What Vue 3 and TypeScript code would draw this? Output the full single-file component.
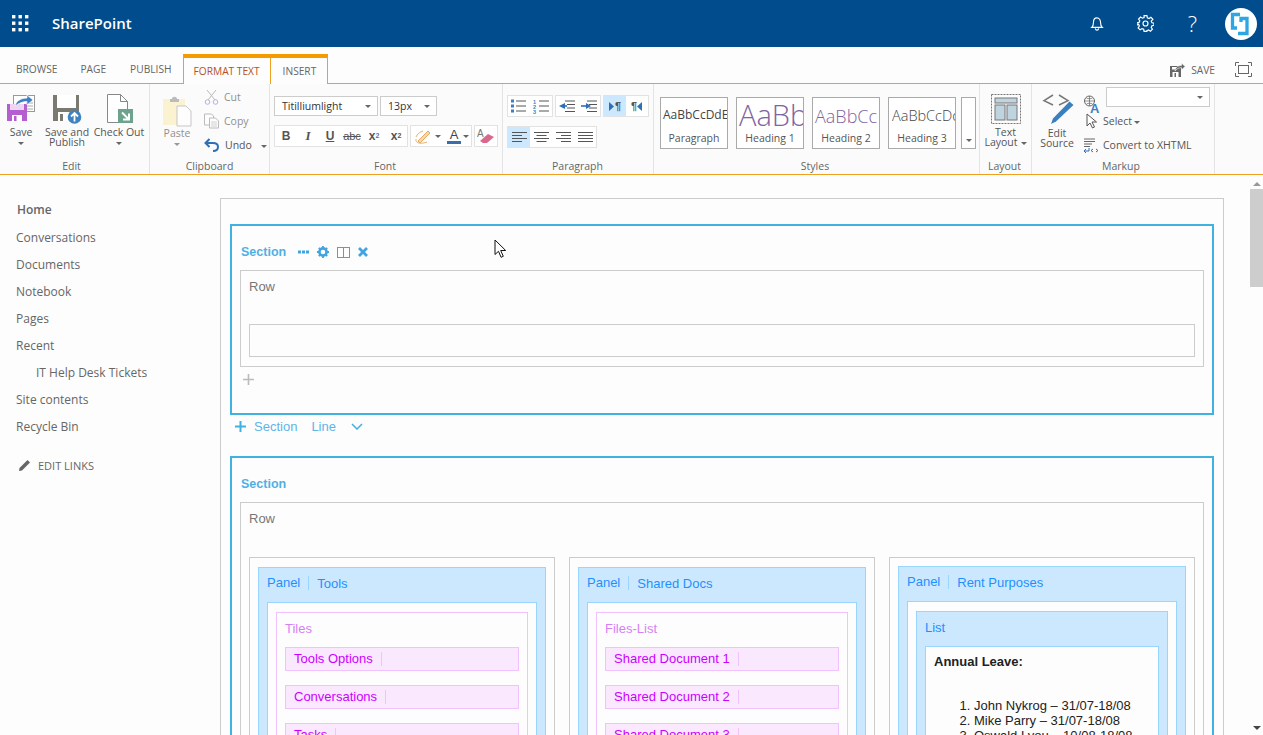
<script setup lang="ts">
const nav = ['Conversations', 'Documents', 'Notebook', 'Pages', 'Recent']
const tileCols = [
  { panel: 'Tools', title: 'Tiles', tiles: ['Tools Options', 'Conversations', 'Tasks'] },
  { panel: 'Shared Docs', title: 'Files-List', tiles: ['Shared Document 1', 'Shared Document 2', 'Shared Document 3'] },
]
const styles = [
  { sample: 'AaBbCcDdE', label: 'Paragraph', cls: 's-p' },
  { sample: 'AaBb', label: 'Heading 1', cls: 's-1' },
  { sample: 'AaBbCc', label: 'Heading 2', cls: 's-2' },
  { sample: 'AaBbCcDd', label: 'Heading 3', cls: 's-3' },
]
const leave = ['John Nykrog – 31/07-18/08', 'Mike Parry – 31/07-18/08', 'Oswald Lyou – 10/08-18/08']
</script>

<template>
  <div class="app">
    <header class="topbar">
      <svg class="waffle" width="17" height="17" viewBox="0 0 17 17" fill="#fff">
        <rect v-for="p in [0,1,2,3,4,5,6,7,8]" :key="p" :x="(p % 3) * 6.5" :y="Math.floor(p / 3) * 6.5" width="3.4" height="3.4" />
      </svg>
      <span class="brand">SharePoint</span>
      <span class="grow"></span>
      <svg class="tico" width="14" height="17" viewBox="0 0 16 18" fill="none" stroke="#fff" stroke-width="1.3"><path d="M2 13.500h12c-1.600-1.400-1.900-3-1.900-5.500 0-3-1.600-5.500-4.100-5.500S3.900 5 3.900 8c0 2.500-.3 4.100-1.900 5.500z"/><path d="M6 14.500c.3 1.300 1 2 2 2s1.700-.7 2-2"/></svg>
      <svg class="tico gear" width="17" height="17" viewBox="0 0 24 24" fill="none" stroke="#fff" stroke-width="1.700"><circle cx="12" cy="12" r="3.500"/><path d="M10 1h4l.6 3 2.400 1 2.600-1.700 2.800 2.800L20.100 8.700l1 2.300 2.900.6v3l-2.900.6-1 2.400 1.700 2.500-2.800 2.800-2.600-1.700-2.400 1L14 23h-4l-.6-2.800-2.400-1-2.600 1.700-2.800-2.800 1.700-2.500-1-2.400L0 14v-3l2.900-.6 1-2.300L2.200 5.600 5 2.800 7.600 4.500 10 3.500z"/></svg>
      <span class="help">?</span>
      <span class="avatar">
        <svg width="36" height="36" viewBox="0 0 36 36"><circle cx="18" cy="18" r="16" fill="#fff"/><path d="M17 8.500H9.500V22H14M18 16v-3.500h6v15H15" fill="none" stroke="#2fa6e4" stroke-width="3.300"/></svg>
      </span>
    </header>

    <nav class="tabs">
      <span class="tab">BROWSE</span>
      <span class="tab t2">PAGE</span>
      <span class="tab t3">PUBLISH</span>
      <span class="tab ctx active">FORMAT TEXT</span>
      <span class="tab ctx c-ins">INSERT</span>
      <span class="grow"></span>
      <svg width="16" height="16" viewBox="0 0 16 16"><path d="M1 4h9l2 2v9H1z" fill="#666"/><rect x="3.500" y="10" width="6" height="5" fill="#fff"/><rect x="5.500" y="11" width="1.500" height="4" fill="#666"/><rect x="3" y="5" width="5" height="2.500" fill="#fff"/><path d="M6 9c.5-4 3.500-5.500 6.500-5.500V1L16 4.500 12.500 8V5.700C10 5.700 8 6.500 6 9z" fill="#666" stroke="#fff" stroke-width=".6"/></svg>
      <span class="savetxt">SAVE</span>
      <svg class="focus" width="17" height="15" viewBox="0 0 17 15" fill="none" stroke="#666"><path d="M.5 4V.5H4M13 .5h3.500V4M16.500 11v3.500H13M4 14.500H.5V11"/><rect x="3.500" y="3.500" width="10" height="8"/></svg>
    </nav>

    <section class="ribbon">
      <div class="grp g-edit">
        <div class="grp-body">
          <div class="big w-save">
            <svg width="30" height="30" viewBox="0 0 30 30">
              <rect x="7.500" y="1.500" width="21" height="16" fill="#fff" stroke="#999"/>
              <path d="M20 9h7M20 12h7M20 15h7" stroke="#aaa"/>
              <path d="M1 10h20v17H1z" fill="#b45ed0"/>
              <rect x="6" y="21" width="10" height="6" fill="#fff"/>
              <rect x="8" y="22" width="2.500" height="5" fill="#b45ed0"/>
              <rect x="4" y="10" width="14" height="6" fill="#ecd6f4"/>
              <path d="M9 12c1-5 6-8 12-8V1l6 5-6 5V7.500c-4 0-8 1.500-12 4.500z" fill="#3f7fbf" stroke="#fff" stroke-width=".7"/>
            </svg>
            <span>Save</span><i class="caret"></i>
          </div>
          <div class="big w-pub">
            <svg width="30" height="30" viewBox="0 0 30 30">
              <path d="M1 1h26v26H1z" fill="#7a7a70"/>
              <rect x="5" y="1" width="19" height="13" fill="#fff"/>
              <rect x="6" y="18" width="13" height="9" fill="#fff"/>
              <rect x="8" y="20" width="3" height="7" fill="#7a7a70"/>
              <circle cx="22.500" cy="23" r="6.800" fill="#3f82c0"/>
              <path d="M22.500 27.500v-8M19 22.500l3.500-3.500 3.500 3.500" fill="none" stroke="#fff" stroke-width="1.800"/>
            </svg>
            <span>Save and<br />Publish</span>
          </div>
          <div class="big w-chk">
            <svg width="30" height="30" viewBox="0 0 30 30">
              <path d="M3.500.5h13l7 7v21h-20z" fill="#fff" stroke="#888"/>
              <path d="M16.500.5v7h7" fill="none" stroke="#888"/>
              <rect x="14" y="15" width="15" height="14" fill="#6da28c"/>
              <path d="M18 18.500l7 7M25 19.500v6h-6" fill="none" stroke="#fff" stroke-width="2"/>
            </svg>
            <span>Check Out</span><i class="caret"></i>
          </div>
        </div>
        <div class="grp-label l-edit">Edit</div>
      </div>

      <div class="grp g-clip">
        <div class="grp-body">
          <div class="big w-paste faded">
            <svg width="30" height="32" viewBox="0 0 30 32">
              <path d="M1 4h22v26H1z" fill="#fbeebc"/>
              <path d="M8 4h2c0-3 5-3 5 0h2v3H8z" fill="#999"/>
              <path d="M15 11h9l5 5v15H15z" fill="#fff" stroke="#aaa"/>
            </svg>
            <span class="paste-l">Paste</span><i class="caret"></i>
          </div>
          <div class="stack">
            <div class="small faded"><svg width="15" height="16" viewBox="0 0 15 16" fill="none" stroke="#999"><path d="M3 1l8 10M12 1L4 11"/><circle cx="3.500" cy="13" r="2.300" stroke="#8a8fd0"/><circle cx="11.500" cy="13" r="2.300" stroke="#8a8fd0"/></svg><span>Cut</span></div>
            <div class="small faded"><svg width="15" height="16" viewBox="0 0 15 16" fill="#fff" stroke="#999"><path d="M.5 1h7l2 2v9h-9z"/><path d="M5.500 5h6l3 3v7h-9z"/><path d="M7 9h6M7 11h6M7 13h6" stroke="#bbb"/></svg><span>Copy</span></div>
            <div class="small"><svg width="16" height="14" viewBox="0 0 16 14" fill="none" stroke="#2f6fb5" stroke-width="2"><path d="M5.500 1L1.500 5l4 4M2 5h7c3 0 5 1.500 5 4s-2 4-5 4"/></svg><span>Undo</span><i class="caret c2"></i></div>
          </div>
        </div>
        <div class="grp-label">Clipboard</div>
      </div>

      <div class="grp g-font">
        <div class="grp-body col">
          <div class="line">
            <div class="sel s-font">Titilliumlight<i class="caret"></i></div>
            <div class="sel s-size">13px<i class="caret"></i></div>
          </div>
          <div class="line l2">
            <div class="btns fmt">
              <span class="ib b">B</span><span class="ib it">I</span><span class="ib un">U</span>
              <span class="ib st">abc</span><span class="ib b">x<sub>2</sub></span><span class="ib b">x<sup>2</sup></span>
            </div>
            <div class="btns colors">
              <span class="ib cb"><svg width="18" height="17" viewBox="0 0 18 17" fill="none"><path d="M3 13L13 3l2 2L5 15z" fill="#f3d9b0" stroke="#e8a860"/><path d="M1 11c-1 5 6 5 11 3" stroke="#eab070"/><path d="M1 9c1-3 4-5 7-6" stroke="#eab070"/></svg><i class="caret"></i></span>
              <span class="ib cb fa"><span class="a-l">A</span><i class="caret"></i></span>
            </div>
            <div class="btns erase"><svg width="18" height="16" viewBox="0 0 18 16"><text x="0" y="9" font-size="10" fill="#777" font-family="Liberation Sans">A</text><path d="M3 13l8-7 6 3-7 6H6z" fill="#d9688f"/></svg></div>
          </div>
        </div>
        <div class="grp-label l-pad">Font</div>
      </div>

      <div class="grp g-para">
        <div class="grp-body col">
          <div class="line p1">
            <div class="btns two">
              <span class="ib"><svg width="16" height="14" viewBox="0 0 16 14"><path d="M5 2h10M5 7h10M5 12h10" stroke="#555"/><path d="M0 .5h3v3H0zM0 5.500h3v3H0zM0 10.500h3v3H0z" fill="#3f7fbf"/></svg></span>
              <span class="ib"><svg width="16" height="15" viewBox="0 0 16 15"><path d="M6 2h10M6 7h10M6 12h10" stroke="#555"/><text x="0" y="4.500" font-size="5.500" font-weight="700" fill="#3f7fbf" font-family="Liberation Sans">1</text><text x="0" y="9.500" font-size="5.500" font-weight="700" fill="#3f7fbf" font-family="Liberation Sans">2</text><text x="0" y="14.500" font-size="5.500" font-weight="700" fill="#3f7fbf" font-family="Liberation Sans">3</text></svg></span>
            </div>
            <div class="btns two">
              <span class="ib"><svg width="16" height="12" viewBox="0 0 16 12"><path d="M6 1h10M8 4.500h8M8 8h8M6 11.500h10" stroke="#555"/><path d="M6 3v6L0 6z" fill="#2f6fb5"/><path d="M2 5.200h6v1.600H2z" fill="#2f6fb5"/></svg></span>
              <span class="ib"><svg width="16" height="12" viewBox="0 0 16 12"><path d="M6 1h10M8 4.500h8M8 8h8M6 11.500h10" stroke="#555"/><path d="M5 3v6l5 -3z" fill="#2f6fb5"/><path d="M0 5.200h6v1.600H0z" fill="#2f6fb5"/></svg></span>
            </div>
            <div class="btns two">
              <span class="ib on dir"><svg width="6" height="9" viewBox="0 0 6 9"><path d="M0 0l5 4.500L0 9z" fill="#2f6fb5"/></svg><b>¶</b></span>
              <span class="ib dir"><b>¶</b><svg width="6" height="9" viewBox="0 0 6 9"><path d="M5 0L0 4.500 5 9z" fill="#2f6fb5"/></svg></span>
            </div>
          </div>
          <div class="line l2">
            <div class="btns four">
              <span class="ib on"><svg width="15" height="11" viewBox="0 0 15 11" stroke="#555"><path d="M0 .5h15M0 3.500h10M0 6.500h15M0 9.500h10"/></svg></span>
              <span class="ib"><svg width="15" height="11" viewBox="0 0 15 11" stroke="#555"><path d="M0 .5h15M2.500 3.500h10M0 6.500h15M2.500 9.500h10"/></svg></span>
              <span class="ib"><svg width="15" height="11" viewBox="0 0 15 11" stroke="#555"><path d="M0 .5h15M5 3.500h10M0 6.500h15M5 9.500h10"/></svg></span>
              <span class="ib"><svg width="15" height="11" viewBox="0 0 15 11" stroke="#555"><path d="M0 .5h15M0 3.500h15M0 6.500h15M0 9.500h15"/></svg></span>
            </div>
          </div>
        </div>
        <div class="grp-label l-pad2">Paragraph</div>
      </div>

      <div class="grp g-styles">
        <div class="grp-body gallery">
          <div v-for="s in styles" :key="s.label" class="style">
            <div class="sample" :class="s.cls">{{ s.sample }}</div>
            <div class="style-l">{{ s.label }}</div>
          </div>
          <div class="more"><i class="caret"></i></div>
        </div>
        <div class="grp-label l-sty">Styles</div>
      </div>

      <div class="grp g-layout">
        <div class="grp-body">
          <div class="big w-lay">
            <svg width="30" height="30" viewBox="0 0 30 30" fill="none">
              <rect x=".5" y=".5" width="29" height="29" stroke="#777" stroke-dasharray="2 1"/>
              <rect x="4" y="4" width="22" height="5" fill="#c0d4e0" stroke="#777"/>
              <rect x="4" y="11" width="10" height="15" fill="#c0d4e0" stroke="#777"/>
              <rect x="16" y="11" width="10" height="15" fill="#c0d4e0" stroke="#777"/>
            </svg>
            <span>Text<br />Layout<i class="caret c3"></i></span>
          </div>
        </div>
        <div class="grp-label l-lay">Layout</div>
      </div>

      <div class="grp g-markup">
        <div class="grp-body">
          <div class="big w-src">
            <svg width="34" height="34" viewBox="0 0 34 34" fill="none">
              <path d="M13 3L4 8.700 13 13M19 3l9 5.700L19 13" stroke="#777" stroke-width="1.500"/>
              <path d="M29.500 9.500L33.500 13 16 29.500 11 32 13 26.500z" fill="#3a7fbf"/>
            </svg>
            <span>Edit<br />Source</span>
          </div>
          <div class="mk">
            <div class="mk-top">
              <svg width="18" height="18" viewBox="0 0 18 18" fill="none"><circle cx="6.500" cy="6" r="5" stroke="#666"/><path d="M1.500 6h10M6.500 1v10M3.500 3c2 1 4 1 6 0M3.500 9c2-1 4-1 6 0" stroke="#666" stroke-width=".7"/><text x="7" y="18" font-size="13" font-weight="700" fill="#3f7fbf" font-family="Liberation Sans">A</text></svg>
              <div class="sel s-mk"><i class="caret"></i></div>
            </div>
            <div class="small sel-l">
              <svg width="12" height="16" viewBox="0 0 12 16" fill="#fff" stroke="#555"><path d="M1 1v12l3-3 2.500 5 2-1-2.500-5h4.500z"/></svg>
              <span>Select</span><i class="caret c4"></i>
            </div>
            <div class="small conv">
              <svg width="16" height="15" viewBox="0 0 16 15" fill="none"><path d="M1 1h11M1 3.500h11M1 6h8M1 8.500h6" stroke="#666"/><path d="M6 10v3H1m2-2l-2 2 2 2" stroke="#2f6fb5"/><path d="M10 11l-2 1.500 2 1.500M13 11l2 1.500-2 1.500" stroke="#666"/></svg>
              <span>Convert to XHTML</span>
            </div>
          </div>
        </div>
        <div class="grp-label l-mk">Markup</div>
      </div>
    </section>

    <main class="body">
      <aside class="side">
        <div class="nav-i home">Home</div>
        <div v-for="n in nav" :key="n" class="nav-i">{{ n }}</div>
        <div class="nav-i sub">IT Help Desk Tickets</div>
        <div class="nav-i">Site contents</div>
        <div class="nav-i">Recycle Bin</div>
        <div class="edit-links">
          <svg width="13" height="13" viewBox="0 0 13 13" fill="#666"><path d="M9.500 1l2.500 2.500L4 11.500 1 12l.5-3z"/></svg>
          <span>EDIT LINKS</span>
        </div>
      </aside>

      <div class="page">
        <section class="sect s-one">
          <div class="sect-h">
            <span class="sect-t">Section</span>
            <svg width="11" height="4" viewBox="0 0 11 4" fill="#41a5e1"><rect width="3" height="3" y=".5"/><rect x="4" width="3" height="3" y=".5"/><rect x="8" width="3" height="3" y=".5"/></svg>
            <svg width="12" height="12" viewBox="0 0 12 12"><circle cx="6" cy="6" r="3.600" fill="none" stroke="#41a5e1" stroke-width="2.600"/><path d="M6 0v2.500M6 9.500V12M0 6h2.500M9.500 6H12M1.800 1.800l1.800 1.800M8.400 8.400l1.800 1.800M10.200 1.800L8.400 3.600M3.600 8.400l-1.800 1.800" stroke="#41a5e1" stroke-width="1.800"/></svg>
            <svg width="13" height="11" viewBox="0 0 13 11" fill="none" stroke="#41a5e1"><rect x=".5" y=".5" width="12" height="10"/><path d="M6.500 .5v10"/></svg>
            <svg width="10" height="10" viewBox="0 0 10 10" stroke="#41a5e1" stroke-width="2.800"><path d="M1 1l8 8M9 1l-8 8"/></svg>
          </div>
          <div class="rowbox">
            <div class="row-t">Row</div>
            <div class="empty"></div>
          </div>
          <svg class="addrow" width="11" height="11" viewBox="0 0 11 11" stroke="#bbb" stroke-width="1.600"><path d="M5.500 0v11M0 5.500h11"/></svg>
        </section>

        <div class="addsec">
          <svg width="11" height="11" viewBox="0 0 11 11" stroke="#41b1e1" stroke-width="2"><path d="M5.500 0v11M0 5.500h11"/></svg>
          <span class="a1">Section</span>
          <span class="a2">Line</span>
          <svg width="12" height="7" viewBox="0 0 12 7" fill="none" stroke="#41b1e1" stroke-width="1.500"><path d="M1 1l5 5 5-5"/></svg>
        </div>

        <section class="sect s-two">
          <div class="sect-h"><span class="sect-t">Section</span></div>
          <div class="rowbox">
            <div class="row-t">Row</div>
            <div class="cols">
              <div v-for="c in tileCols" :key="c.panel" class="colbox">
                <div class="panel">
                  <div class="panel-h"><span class="pl">Panel</span><span class="pn">{{ c.panel }}</span></div>
                  <div class="panel-b">
                    <div class="tiles">
                      <div class="tiles-t">{{ c.title }}</div>
                      <div v-for="t in c.tiles" :key="t" class="tile"><span>{{ t }}</span></div>
                    </div>
                  </div>
                </div>
              </div>
              <div class="colbox">
                <div class="panel third">
                  <div class="panel-h"><span class="pl">Panel</span><span class="pn">Rent Purposes</span></div>
                  <div class="panel-b">
                    <div class="panel listp">
                      <div class="list-h">List</div>
                      <div class="list-b">
                        <div class="annual">Annual Leave:</div>
                        <ol>
                          <li v-for="l in leave" :key="l">{{ l }}</li>
                        </ol>
                      </div>
                    </div>
                  </div>
                </div>
              </div>
            </div>
          </div>
        </section>
      </div>

      <div class="scroll">
        <i class="arr up"></i>
        <div class="thumb"></div>
        <span class="grow"></span>
        <i class="arr dn"></i>
      </div>
    </main>

    <svg class="cursor" width="14" height="20" viewBox="0 0 14 20"><path d="M1 1v14.500l3.500-3.200 2.600 6 2.200-1-2.600-5.800h5z" fill="#fff" stroke="#111"/></svg>
  </div>
</template>

<style>
html, body { margin: 0; padding: 0; background: #fdfdfd; overflow: hidden; }
</style>

<style scoped>
.app { position: relative; width: 1263px; height: 735px; overflow: hidden; background: #fdfdfd; font-family: "Open Sans", sans-serif; color: #555; display: flex; flex-direction: column; }
.grow { flex: 1; }

.topbar { height: 47px; flex: none; background: #004c8c; display: flex; align-items: center; color: #fff; }
.waffle { margin-left: 12px; }
.brand { margin-left: 23px; font-size: 15px; font-weight: 600; margin-top: -2px; }
.gear { margin-left: 33px; }
.help { margin-left: 32px; font-size: 22px; width: 13px; text-align: center; font-weight: 300; margin-top: -2px; }
.avatar { margin: 0 4px 0 24px; width: 36px; height: 36px; display: block; }

.tabs { height: 37px; flex: none; box-sizing: border-box; border-bottom: 1px solid #f0a020; display: flex; align-items: flex-end; font-size: 10.200px; color: #666; padding-right: 11px; }
.tab { height: 29px; line-height: 31px; box-sizing: border-box; margin-left: 16px; white-space: nowrap; }
.t2 { margin-left: 23px; }
.t3 { margin-left: 24px; margin-right: 11px; }
.ctx { margin: 0 0 -1px; height: 30px; border: 1px solid #f0a020; border-top: 4px solid #f59b00; border-bottom: 0; padding: 0 10px; line-height: 26px; background: #fdfdfd; }
.ctx + .ctx { border-left: 0; }
.c-ins { padding: 0 11px 0 12px; }
.active { color: #b5521b; }
.tabs > svg { align-self: flex-start; margin-top: 15px; }
.savetxt { align-self: flex-start; margin: 16px 0 0 6px; }
.tabs > svg.focus { margin: 15px 0 0 20px; }

.ribbon { height: 91px; flex: none; box-sizing: border-box; border-bottom: 1px solid #f0a020; display: flex; font-size: 10.500px; color: #555; background: #fbfbfb; }
.grp { box-sizing: border-box; height: 90px; border-right: 1px solid #e4e4e4; display: flex; flex-direction: column; flex: none; }
.grp-body { height: 75px; display: flex; }
.grp-label { text-align: center; color: #666; line-height: 14px; height: 14px; }
.l-edit { margin-right: 6px; }
.l-pad { margin-left: -6px; }
.l-pad2 { margin-left: -4px; margin-right: 1px; }
.l-sty { margin-right: 3px; }
.l-lay { margin-right: 2px; }
.l-mk { margin-right: 4px; }
.col { flex-direction: column; }
.g-edit { width: 150px; }
.g-clip { width: 120px; }
.g-font { width: 233px; padding-left: 4px; }
.g-para { width: 151px; padding-left: 4px; }
.g-styles { width: 326px; }
.g-layout { width: 52px; }
.g-markup { width: 183px; }

.big { display: flex; flex-direction: column; align-items: center; line-height: 10px; text-align: center; white-space: nowrap; padding-top: 10px; box-sizing: border-box; }
.big > span { margin-top: 3px; }
.caret { display: inline-block; width: 0; height: 0; border: 3px solid transparent; border-top: 3px solid #666; border-bottom: 0; }
.big > .caret { margin-top: 5px; }
.w-save { width: 42px; }
.w-pub { width: 50px; }
.w-chk { width: 54px; }
.faded { opacity: .65; }
.w-paste { width: 54px; padding-top: 11px; }
.paste-l { margin-top: 1px !important; }
.stack { display: flex; flex-direction: column; padding-top: 1px; }
.small { height: 24px; display: flex; align-items: center; gap: 5px; white-space: nowrap; }
.c2 { margin-left: 4px; margin-top: 3px; }

.line { display: flex; gap: 2px; padding-top: 12px; }
.l2 { padding-top: 9px; }
.sel { box-sizing: border-box; height: 20px; border: 1px solid #ccc; background: #fff; display: flex; align-items: center; justify-content: space-between; padding: 0 6px 0 7px; font-size: 10.500px; color: #333; }
.s-font { width: 104px; }
.s-size { width: 57px; }
.btns { box-sizing: border-box; height: 22px; border: 1px solid #e2e2e2; background: #fff; display: flex; align-items: stretch; color: #555; }
.ib { display: flex; align-items: center; justify-content: center; width: 22px; font-family: "Liberation Sans", sans-serif; font-size: 12px; }
.fmt { width: 134px; }
.b { font-weight: 700; color: #555; }
.b sub, .b sup { font-size: 7px; color: #3f7fbf; line-height: 0; }
.b sup { color: #555; }
.it { font-style: italic; font-weight: 700; font-family: "Liberation Serif", serif; font-size: 13px; }
.un { text-decoration: underline; font-weight: 700; }
.st { text-decoration: line-through; font-size: 11px; }
.colors { width: 62px; }
.cb { width: 34px; gap: 2px; }
.fa { width: 26px; }
.a-l { font-size: 13px; line-height: 13px; border-bottom: 3px solid #3a6ea8; width: 14px; text-align: center; color: #444; }
.erase { width: 24px; align-items: center; justify-content: center; }
.p1 { padding-top: 11px; gap: 2px; }
.two { width: 46px; }
.two .ib { width: 22px; }
.four { width: 90px; }
.four .ib { width: 22px; }
.on { background: #cce8ff; }
.dir b { font-size: 11px; color: #555; }
.gallery { padding: 13px 0 0 6px; gap: 8px; box-sizing: border-box; }
.style { box-sizing: border-box; width: 68px; height: 52px; border: 1px solid #aaa; background: #fff; overflow: hidden; display: flex; flex-direction: column; align-items: center; }
.sample { height: 33px; line-height: 34px; white-space: nowrap; width: 100%; overflow: hidden; text-align: left; padding-left: 2px; box-sizing: border-box; color: #444; }
.s-p { font-size: 12px; font-weight: 500; }
.s-1 { font-size: 29px; color: #8064a2; font-weight: 300; line-height: 33px; }
.s-2 { font-size: 18px; color: #8064a2; line-height: 36px; font-weight: 300; }
.s-3 { font-size: 14.500px; color: #444; line-height: 36px; font-weight: 300; padding-left: 3px; }
.style-l { line-height: 12px; margin-top: 1px; color: #555; }
.more { box-sizing: border-box; width: 15px; height: 52px; margin-left: -3px; border: 1px solid #aaa; background: #fff; display: flex; align-items: flex-end; justify-content: center; padding-bottom: 6px; }
.w-lay { width: 50px; padding-left: 1px; }
.c3 { margin-left: 3px; vertical-align: middle; }
.w-src { width: 51px; padding: 8px 1px 0 0; }
.w-src > span { margin-top: 2px; }
.mk { width: 127px; display: flex; flex-direction: column; padding-top: 3px; }
.mk-top { display: flex; gap: 5px; height: 20px; }
.mk-top svg { margin-top: 8px; flex: none; }
.s-mk { width: 104px; flex: none; justify-content: flex-end; }
.small.sel-l { height: 20px; margin-top: 4px; padding-left: 3px; gap: 5px; }
.c4 { margin-left: -3px; margin-top: 3px; }
.small.conv { height: 22px; margin-top: 3px; gap: 4px; }

.body { flex: 1; display: flex; min-height: 0; }
.side { width: 220px; flex: none; padding-top: 21px; box-sizing: border-box; font-size: 12px; color: #666; }
.nav-i { height: 27px; line-height: 27px; padding-left: 16px; white-space: nowrap; }
.home { font-weight: 600; padding-left: 17px; height: 28px; }
.sub { padding-left: 36px; }
.edit-links { margin-top: 12px; padding-left: 18px; display: flex; align-items: center; gap: 7px; font-size: 11px; height: 27px; }

.page { flex: none; width: 1004px; box-sizing: border-box; margin-top: 23px; border: 1px solid #ccc; border-bottom: 0; padding: 25px 9px 0 9px; font-family: "Liberation Sans", sans-serif; background: #fdfdfd; }
.sect { box-sizing: border-box; border: 2px solid #41b1e1; padding: 0 8px; }
.s-one { height: 191px; }
.sect-h { height: 44px; display: flex; align-items: center; gap: 8px; padding: 8px 0 0 1px; box-sizing: border-box; }
.sect-t { font-size: 12.500px; font-weight: 700; color: #4fb0e6; margin-right: 4px; }
.rowbox { border: 1px solid #ccc; padding: 0 8px 9px; }
.row-t { height: 29px; line-height: 32px; font-size: 13px; color: #777; }
.empty { height: 31px; border: 1px solid #ccc; margin-top: 24px; }
.addrow { display: block; margin: 7px 0 0 3px; }
.addsec { height: 41px; display: flex; align-items: flex-start; padding: 6px 0 0 5px; box-sizing: border-box; font-size: 13px; color: #5fb4e8; line-height: 11px; }
.a1 { margin-left: 8px; }
.a2 { margin-left: 14px; }
.addsec > svg:last-child { margin: 2px 0 0 15px; }
.cols { display: flex; gap: 14px; margin-top: 25px; }
.colbox { box-sizing: border-box; width: 306px; height: 300px; border: 1px solid #ccc; padding: 9px 8px; }
.panel { background: #cce8ff; border: 1px solid #99d5ff; padding: 0 8px; height: 400px; }
.third { margin-top: -1px; }
.panel-h { height: 34px; padding-bottom: 4px; box-sizing: border-box; display: flex; align-items: center; font-size: 13px; color: #1e90ff; }
.pl { padding-right: 8px; border-right: 1px solid #99d5ff; line-height: 14px; margin-right: 8px; }
.panel-b { background: #fdfdfd; border: 1px solid #99d5ff; padding: 9px 8px; height: 300px; }
.tiles { border: 1px solid #f2c2ff; padding: 0 8px; height: 300px; }
.tiles-t { height: 34px; line-height: 31px; font-size: 13px; color: #d680f5; }
.tile { box-sizing: border-box; height: 24px; border: 1px solid #f2c2ff; background: #fae8ff; margin-bottom: 14px; padding: 0 0 1px 8px; display: flex; align-items: center; font-size: 13px; color: #cc00ff; }
.tile span { padding-right: 8px; border-right: 1px solid #f2c2ff; line-height: 14px; }
.listp { height: 300px; }
.list-h { height: 34px; line-height: 31px; font-size: 13px; color: #1e90ff; }
.list-b { background: #fdfdfd; border: 1px solid #99d5ff; height: 200px; padding: 7px 8px; color: #222; font-size: 13px; }
.annual { font-weight: 700; line-height: 16px; }
ol { margin: 28px 0 0; padding-left: 40px; line-height: 15px; }

.scroll { flex: 1; display: flex; flex-direction: column; align-items: flex-end; }
.thumb { width: 13px; height: 98px; background: #cdcdcd; margin-top: 3px; }
.arr { display: block; width: 0; height: 0; margin-right: 2px; border: 4px solid transparent; }
.up { border-bottom: 4px solid #999; border-top: 0; margin-top: 7px; }
.dn { border-top: 4px solid #444; border-bottom: 0; margin-bottom: 5px; }

.cursor { position: absolute; left: 494px; top: 239px; }
</style>
